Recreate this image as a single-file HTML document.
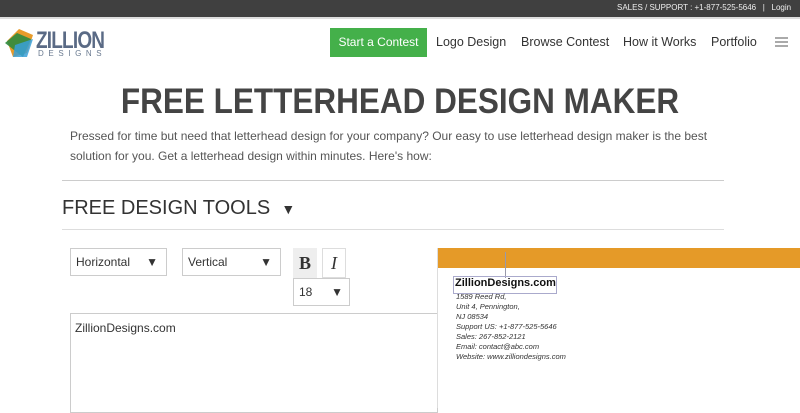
<!DOCTYPE html><html><head><style>
body{margin:0;width:800px;height:400px;overflow:hidden;background:#fff;font-family:"Liberation Sans",sans-serif;position:relative;color:#333}
.a{position:absolute;white-space:nowrap}
.n{position:absolute;top:35px;font-size:12.5px;color:#333}
</style></head><body>
<div class="a" style="left:0;top:0;width:800px;height:17px;background:#404040"></div>
<div class="a" style="left:0;top:17px;width:800px;height:2px;background:#ddd"></div>
<div class="a" style="left:617px;top:3px;font-size:8px;color:#eee">SALES / SUPPORT : +1-877-525-5646 &nbsp;&nbsp;|&nbsp;&nbsp; Login</div>
<svg class="a" style="left:3px;top:27px" width="34" height="32"><polygon points="4,14 16,2 30,8 24,26 10,30" fill="#e89b2a"/><polygon points="2,16 14,6 28,12 20,30" fill="#2e8b3e" opacity=".9"/><polygon points="12,18 30,12 24,30 10,30" fill="#3aa0d8" opacity=".85"/></svg>
<div class="a" style="left:36px;top:27px;font-size:24px;font-weight:bold;color:#5a6a85;letter-spacing:-1px;transform:scaleX(.79);transform-origin:left">ZILLION</div>
<div class="a" style="left:38px;top:49px;font-size:8px;color:#6a7a90;letter-spacing:4.6px">DESIGNS</div>
<div class="a" style="left:330px;top:28px;width:97px;height:29px;background:#44b04a;color:#fff;font-size:12px;line-height:29px;text-align:center">Start a Contest</div>
<div class="n" style="left:436px">Logo Design</div>
<div class="n" style="left:521px">Browse Contest</div>
<div class="n" style="left:623px">How it Works</div>
<div class="n" style="left:711px">Portfolio</div>
<div class="a" style="left:775px;top:37px;width:13px;height:2px;background:#aaa;box-shadow:0 4px #aaa,0 8px #aaa"></div>
<div class="a" style="left:400px;top:82px;font-size:35px;font-weight:bold;color:#444;transform:translateX(-50%) scaleX(.9)">FREE LETTERHEAD DESIGN MAKER</div>
<div class="a" style="left:70px;top:126px;width:640px;font-size:12px;line-height:20px;color:#555;white-space:normal">Pressed for time but need that letterhead design for your company? Our easy to use letterhead design maker is the best solution for you. Get a letterhead design within minutes. Here's how:</div>
<div class="a" style="left:62px;top:180px;width:662px;height:1px;background:#ccc"></div>
<div class="a" style="left:62px;top:197px;font-size:20px;color:#333">FREE DESIGN TOOLS &nbsp;<span style="font-size:14px">▼</span></div>
<div class="a" style="left:62px;top:229px;width:662px;height:1px;background:#ddd"></div>
<div class="a" style="left:70px;top:248px;width:97px;height:28px;border:1px solid #ccc;box-sizing:border-box;font-size:12px;line-height:26px;padding-left:5px">Horizontal<span style="position:absolute;right:8px">▼</span></div>
<div class="a" style="left:182px;top:248px;width:99px;height:28px;border:1px solid #ccc;box-sizing:border-box;font-size:12px;line-height:26px;padding-left:5px">Vertical<span style="position:absolute;right:8px">▼</span></div>
<div class="a" style="left:293px;top:248px;width:24px;height:30px;background:#eee;font:bold 18px 'Liberation Serif',serif;text-align:center;line-height:30px">B</div>
<div class="a" style="left:322px;top:248px;width:24px;height:30px;border:1px solid #ddd;box-sizing:border-box;font:italic 18px 'Liberation Serif',serif;text-align:center;line-height:28px">I</div>
<div class="a" style="left:293px;top:278px;width:57px;height:28px;border:1px solid #ccc;box-sizing:border-box;font-size:12px;line-height:26px;padding-left:5px">18<span style="position:absolute;right:6px">▼</span></div>
<div class="a" style="left:70px;top:313px;width:368px;height:100px;border:1px solid #ccc;box-sizing:border-box;font-size:12px;padding:7px 4px">ZillionDesigns.com</div>
<div class="a" style="left:437px;top:248px;width:363px;height:160px;border-left:1px solid #ddd"></div>
<div class="a" style="left:438px;top:248px;width:362px;height:20px;background:#e59a28"></div>
<div class="a" style="left:505px;top:252px;width:1px;height:26px;background:#99a"></div>
<div class="a" style="left:453px;top:276px;width:102px;height:16px;border:1px solid #aac"></div>
<div class="a" style="left:455px;top:277px;font-size:11px;font-weight:bold;color:#111">ZillionDesigns.com</div>
<div class="a" style="left:456px;top:292px;font-size:7.5px;font-style:italic;line-height:10px;color:#333">1589 Reed Rd,<br>Unit 4, Pennington,<br>NJ 08534<br>Support US: +1-877-525-5646<br>Sales: 267-852-2121<br>Email: contact@abc.com<br>Website: www.zilliondesigns.com</div>
</body></html>
